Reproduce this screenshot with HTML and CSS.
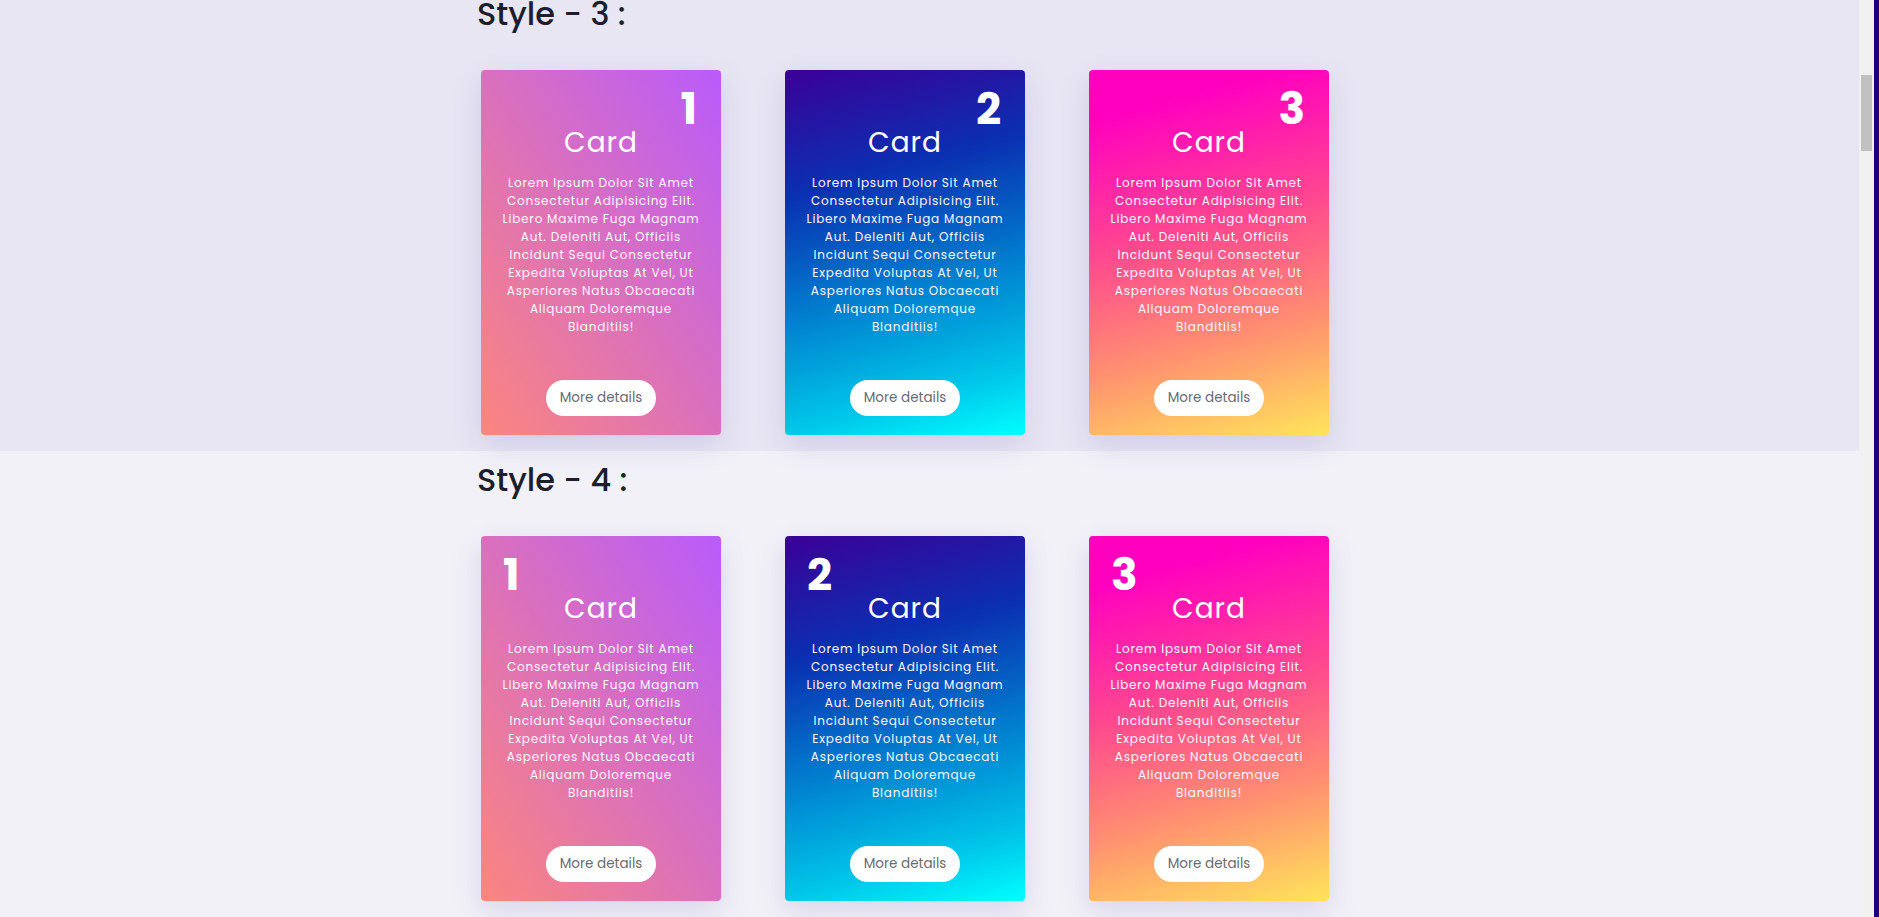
FILE: index.html
```html
<!DOCTYPE html>
<html lang="en">
<head>
    <meta charset="UTF-8">
    <meta name="viewport" content="width=device-width, initial-scale=1.0">
    <title>Card Styles</title>
    <link rel="stylesheet" href="styles.css">
</head>
<body>
    <div class="window">
        <main class="page">
            <section class="style-block style-3">
                <h2>Style - 3 :</h2>
                <div class="cards">
                    <div class="card card-1">
                        <span class="num">1</span>
                        <h3>Card</h3>
                        <p>lorem ipsum dolor sit amet consectetur adipisicing elit. libero maxime fuga magnam aut. deleniti aut, officiis incidunt sequi consectetur expedita voluptas at vel, ut asperiores natus obcaecati aliquam doloremque blanditiis!</p>
                        <a href="#" class="btn">More details</a>
                    </div>
                    <div class="card card-2">
                        <span class="num">2</span>
                        <h3>Card</h3>
                        <p>lorem ipsum dolor sit amet consectetur adipisicing elit. libero maxime fuga magnam aut. deleniti aut, officiis incidunt sequi consectetur expedita voluptas at vel, ut asperiores natus obcaecati aliquam doloremque blanditiis!</p>
                        <a href="#" class="btn">More details</a>
                    </div>
                    <div class="card card-3">
                        <span class="num">3</span>
                        <h3>Card</h3>
                        <p>lorem ipsum dolor sit amet consectetur adipisicing elit. libero maxime fuga magnam aut. deleniti aut, officiis incidunt sequi consectetur expedita voluptas at vel, ut asperiores natus obcaecati aliquam doloremque blanditiis!</p>
                        <a href="#" class="btn">More details</a>
                    </div>
                </div>
            </section>

            <section class="style-block style-4">
                <h2>Style - 4 :</h2>
                <div class="cards">
                    <div class="card card-1">
                        <span class="num">1</span>
                        <h3>Card</h3>
                        <p>lorem ipsum dolor sit amet consectetur adipisicing elit. libero maxime fuga magnam aut. deleniti aut, officiis incidunt sequi consectetur expedita voluptas at vel, ut asperiores natus obcaecati aliquam doloremque blanditiis!</p>
                        <a href="#" class="btn">More details</a>
                    </div>
                    <div class="card card-2">
                        <span class="num">2</span>
                        <h3>Card</h3>
                        <p>lorem ipsum dolor sit amet consectetur adipisicing elit. libero maxime fuga magnam aut. deleniti aut, officiis incidunt sequi consectetur expedita voluptas at vel, ut asperiores natus obcaecati aliquam doloremque blanditiis!</p>
                        <a href="#" class="btn">More details</a>
                    </div>
                    <div class="card card-3">
                        <span class="num">3</span>
                        <h3>Card</h3>
                        <p>lorem ipsum dolor sit amet consectetur adipisicing elit. libero maxime fuga magnam aut. deleniti aut, officiis incidunt sequi consectetur expedita voluptas at vel, ut asperiores natus obcaecati aliquam doloremque blanditiis!</p>
                        <a href="#" class="btn">More details</a>
                    </div>
                </div>
            </section>
        </main>

        <!-- scrollbar track on the right -->
        <div class="scrollbar">
            <div class="thumb"></div>
        </div>
        <div class="edge"></div>
    </div>
</body>
</html>
```

FILE: styles.css
```css
* {
    box-sizing: border-box;
}

body {
    font-family: "Poppins", "Open Sans", sans-serif;
    margin: 0;
    padding: 0;
    background-color: #f2f1f7;
}

.window {
    display: flex;
    height: 100vh;
    overflow: hidden;
}

.page {
    flex: 1;
    overflow: hidden;
}

.scrollbar {
    width: 15px;
    background-color: #f1f1f1;
    padding: 75px 2px 0 2px;
}

.thumb {
    height: 76px;
    background-color: #c1c1c1;
}

.edge {
    width: 5px;
    background-color: #1f0078;
}

/* each style block is one band of the page */
.style-block {
    height: 466px;
    padding: 5px 0 0 477px;
}

.style-3 {
    background-color: #e8e6f3;
    margin-top: -15px;
}

.style-4 {
    background-color: #f2f1f7;
}

h2 {
    margin: 0 0 32px 0;
    font-size: 32px;
    line-height: 48px;
    font-weight: 500;
    color: #1d1d2b;
}

.cards {
    display: flex;
    gap: 64px;
    padding-left: 4px;
}

.card {
    position: relative;
    width: 240px;
    height: 365px;
    padding: 52px 18px 19px 18px;
    border-radius: 4px;
    display: flex;
    flex-direction: column;
    align-items: center;
    color: #fff;
    text-align: center;
    box-shadow: 0 10px 30px rgba(90, 70, 180, 0.16);
}

.card-1 {
    background: linear-gradient(to top right, #fb857e, #b95bfb);
}

.card-2 {
    background: linear-gradient(165deg, #3b0098 0%, #0a30b2 30%, #0088d2 62%, #00c8ea 85%, #00ffff 100%);
}

.card-3 {
    background: linear-gradient(165deg, #ff00bf 12%, #ff4a8e 45%, #ff9070 72%, #ffe45a 100%);
}

.num {
    position: absolute;
    top: 17px;
    font-size: 44px;
    line-height: 44px;
    font-weight: 700;
}

.style-3 .num {
    right: 24px;
}

.style-4 .num {
    left: 22px;
}

h3 {
    margin: 0 0 10px 0;
    font-size: 28px;
    line-height: 42px;
    font-weight: 400;
    letter-spacing: 1px;
}

p {
    margin: 0;
    font-size: 12px;
    line-height: 18px;
    letter-spacing: 0.8px;
    text-transform: capitalize;
    color: #fdf6ff;
}

.btn {
    margin-top: auto;
    height: 36px;
    line-height: 36px;
    padding: 0 14px;
    border-radius: 18px;
    background-color: #fff;
    color: #6a6a72;
    font-size: 13.5px;
    text-decoration: none;
}
```
